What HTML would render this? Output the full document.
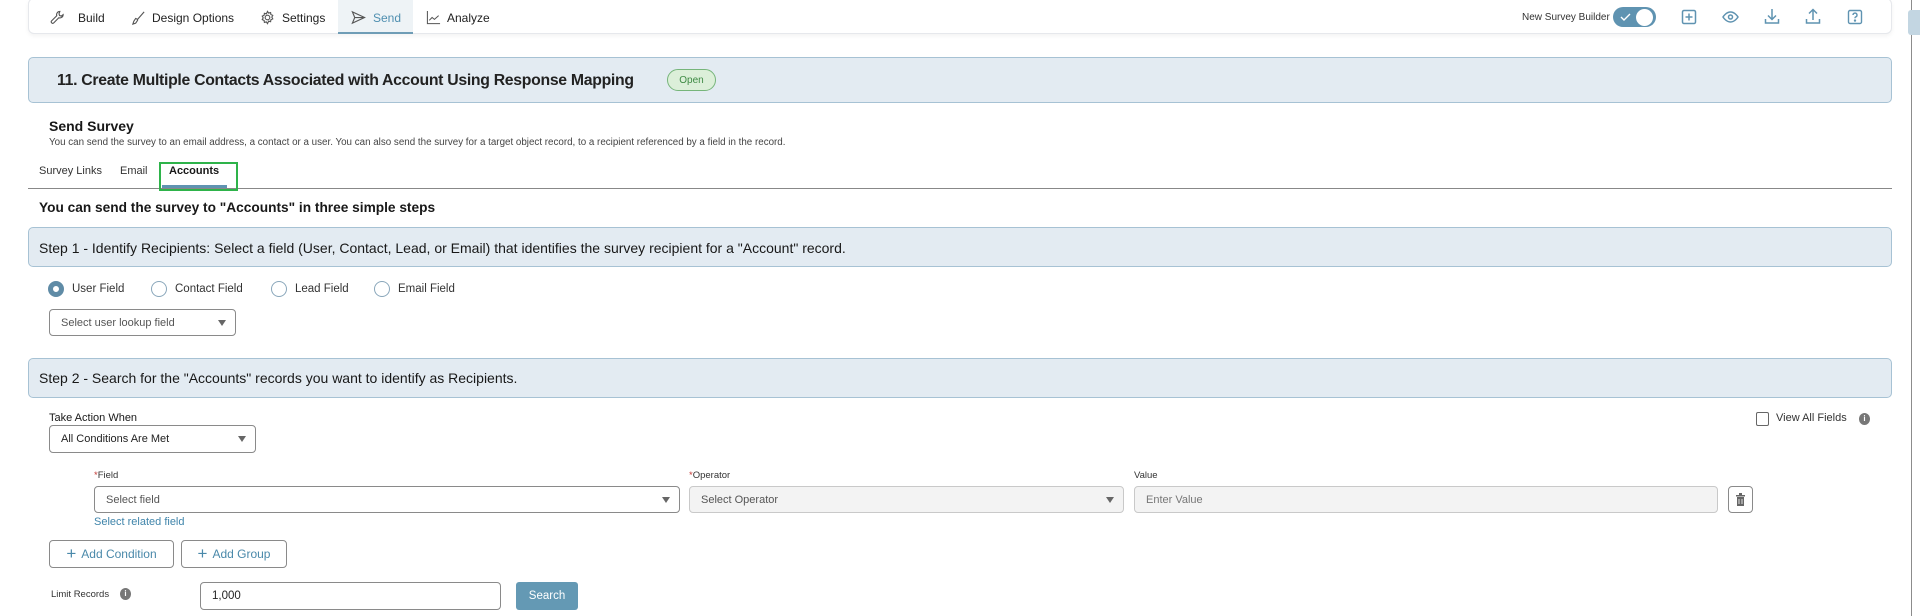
<!DOCTYPE html>
<html><head><meta charset="utf-8">
<style>
*{box-sizing:border-box;margin:0;padding:0}
body{width:1920px;height:616px;background:#fff;position:relative;overflow:hidden;font-family:"Liberation Sans",sans-serif;color:#181818}
.a{position:absolute;white-space:nowrap}
.nav{left:28px;top:-2px;width:1864px;height:36px;border:1px solid #e6e8ec;border-radius:6px;background:#fff;box-shadow:0 2px 4px rgba(0,0,0,.05)}
.ni{font-size:12px;top:11px;color:#222}
.box{left:28px;width:1864px;background:#e3ebf2;border:1px solid #a7c2d4;border-radius:5px}
.sel{border:1px solid #8a8a8a;border-radius:4px;background:#fff;font-size:11px;color:#555;padding-left:11px;display:flex;align-items:center}
.car{position:absolute;right:9px;top:50%;margin-top:-3px;width:0;height:0;border-left:4px solid transparent;border-right:4px solid transparent;border-top:6px solid #666}
.rad{width:16px;height:16px;border:1px solid #8aa7bb;border-radius:50%;background:#fff}
.rl{font-size:11.5px;color:#333}
.lbl{font-size:9.5px;color:#333}
.btn{border:1px solid #8a8a8a;border-radius:4px;background:#fff;color:#4a89aa;font-size:12px;display:flex;align-items:center;justify-content:center}
</style></head><body>

<div class="a nav"></div>
<svg class="a" style="left:50px;top:10px" width="15" height="15" viewBox="0 0 16 16" fill="none" stroke="#555" stroke-width="1.2"><path d="M10.5 1.5a3.5 3.5 0 0 0-3.3 4.6L1.8 11.5a1.5 1.5 0 0 0 2.2 2.2l5.4-5.4a3.5 3.5 0 0 0 4.6-3.3l-2 1.5-1.8-.6-.6-1.8z"/></svg>
<div class="a ni" style="left:78px">Build</div>
<svg class="a" style="left:131px;top:10px" width="15" height="15" viewBox="0 0 16 16" fill="none" stroke="#555" stroke-width="1.2"><path d="M14 2L7 10M7 10l-2-1-2 3-1 3 3-1 2-3z"/></svg>
<div class="a ni" style="left:152px">Design Options</div>
<svg class="a" style="left:260px;top:10px" width="15" height="15" viewBox="0 0 16 16" fill="none" stroke="#555" stroke-width="1.2"><circle cx="8" cy="8" r="2.5"/><path d="M8 1.5l1.2 1.8 2.1-.6.3 2.1 2 .9-1 1.9 1 1.9-2 .9-.3 2.1-2.1-.6L8 14.5l-1.2-1.8-2.1.6-.3-2.1-2-.9 1-1.9-1-1.9 2-.9.3-2.1 2.1.6z"/></svg>
<div class="a ni" style="left:282px">Settings</div>
<div class="a" style="left:338px;top:0;width:75px;height:34px;background:#eef3f6;border-bottom:2px solid #6f9db6"></div>
<svg class="a" style="left:351px;top:10px" width="15" height="15" viewBox="0 0 16 16" fill="none" stroke="#555" stroke-width="1.2"><path d="M1.5 2l13 6-13 6 2.5-6zM4 8h10"/></svg>
<div class="a ni" style="left:373px;color:#4f8fb0">Send</div>
<svg class="a" style="left:426px;top:10px" width="15" height="15" viewBox="0 0 16 16" fill="none" stroke="#555" stroke-width="1.1"><path d="M1.5 1v13.5H15M3.5 11l3-3 2.5 2 4.5-4"/></svg>
<div class="a ni" style="left:447px">Analyze</div>

<div class="a" style="left:1522px;top:12px;font-size:10px;color:#333">New Survey Builder</div>
<div class="a" style="left:1613px;top:7px;width:43px;height:20px;border-radius:10px;background:#5f93b1"></div>
<div class="a" style="left:1636px;top:9px;width:17px;height:17px;border-radius:50%;background:#fff"></div>
<svg class="a" style="left:1619px;top:11px" width="13" height="12" viewBox="0 0 13 12" fill="none" stroke="#fff" stroke-width="1.4"><path d="M2 6l3 3 6-6"/></svg>
<svg class="a" style="left:1681px;top:9px" width="16" height="16" viewBox="0 0 16 16" fill="none" stroke="#5f93b1" stroke-width="1.5"><rect x="1.5" y="1.5" width="13" height="13" rx="1.5"/><path d="M8 4.5v7M4.5 8h7"/></svg>
<svg class="a" style="left:1722px;top:10px" width="17" height="14" viewBox="0 0 17 14" fill="none" stroke="#5f93b1" stroke-width="1.5"><path d="M1 7s3-5 7.5-5S16 7 16 7s-3 5-7.5 5S1 7 1 7z"/><circle cx="8.5" cy="7" r="2"/></svg>
<svg class="a" style="left:1764px;top:8px" width="16" height="17" viewBox="0 0 16 17" fill="none" stroke="#5f93b1" stroke-width="1.5"><path d="M8 1v10M4 7.5l4 4 4-4M1.5 11v4h13v-4"/></svg>
<svg class="a" style="left:1805px;top:8px" width="16" height="17" viewBox="0 0 16 17" fill="none" stroke="#5f93b1" stroke-width="1.5"><path d="M8 12V2M4 5.5l4-4 4 4M1.5 11v4h13v-4"/></svg>
<svg class="a" style="left:1847px;top:9px" width="16" height="16" viewBox="0 0 16 16" fill="none" stroke="#5f93b1" stroke-width="1.4"><rect x="1.5" y="1.5" width="13" height="13" rx="1.5"/><path d="M6 6a2 2 0 1 1 2.5 2c-.4.2-.5.6-.5 1.3"/><circle cx="8" cy="11.6" r=".5" fill="#5f93b1"/></svg>

<div class="a" style="left:1911px;top:0;width:1px;height:616px;background:#8c8c8c"></div>
<div class="a" style="left:1908px;top:10px;width:12px;height:25px;background:#c3d6e2;border-radius:3px 0 0 3px"></div>

<div class="a box" style="top:57px;height:46px"></div>
<div class="a" style="left:57px;top:72px;font-size:15.8px;font-weight:bold;color:#222;letter-spacing:-.3px">11. Create Multiple Contacts Associated with Account Using Response Mapping</div>
<div class="a" style="left:667px;top:69px;width:49px;height:22px;border:1px solid #76b57a;border-radius:11px;background:#dcefd9;color:#3e8a44;font-size:10px;display:flex;align-items:center;justify-content:center">Open</div>

<div class="a" style="left:49px;top:118px;font-size:14px;font-weight:bold">Send Survey</div>
<div class="a" style="left:49px;top:137px;font-size:9.8px;color:#444">You can send the survey to an email address, a contact or a user. You can also send the survey for a target object record, to a recipient referenced by a field in the record.</div>

<div class="a" style="left:39px;top:165px;font-size:11px;color:#333">Survey Links</div>
<div class="a" style="left:120px;top:165px;font-size:11px;color:#333">Email</div>
<div class="a" style="left:169px;top:165px;font-size:11px;font-weight:bold">Accounts</div>
<div class="a" style="left:28px;top:188px;width:1864px;height:1px;background:#888"></div>
<div class="a" style="left:162px;top:185px;width:65px;height:3px;background:#5f93b1"></div>
<div class="a" style="left:159px;top:162px;width:79px;height:29px;border:2px solid #2eb34a"></div>

<div class="a" style="left:39px;top:200px;font-size:13.7px;font-weight:bold">You can send the survey to "Accounts" in three simple steps</div>

<div class="a box" style="top:227px;height:40px"></div>
<div class="a" style="left:39px;top:240px;font-size:14px">Step 1 - Identify Recipients: Select a field (User, Contact, Lead, or Email) that identifies the survey recipient for a "Account" record.</div>

<div class="a rad" style="left:48px;top:281px;border:5px solid #5f8ba6"></div>
<div class="a rl" style="left:72px;top:283px">User Field</div>
<div class="a rad" style="left:151px;top:281px"></div>
<div class="a rl" style="left:175px;top:283px">Contact Field</div>
<div class="a rad" style="left:271px;top:281px"></div>
<div class="a rl" style="left:295px;top:283px">Lead Field</div>
<div class="a rad" style="left:374px;top:281px"></div>
<div class="a rl" style="left:398px;top:283px">Email Field</div>

<div class="a sel" style="left:49px;top:309px;width:187px;height:27px">Select user lookup field<span class="car"></span></div>

<div class="a box" style="top:358px;height:40px"></div>
<div class="a" style="left:39px;top:370px;font-size:14px">Step 2 - Search for the "Accounts" records you want to identify as Recipients.</div>

<div class="a" style="left:49px;top:412px;font-size:11px">Take Action When</div>
<div class="a sel" style="left:49px;top:425px;width:207px;height:28px;color:#222">All Conditions Are Met<span class="car"></span></div>

<div class="a" style="left:1756px;top:412px;width:13px;height:14px;border:1px solid #666;border-radius:2px"></div>
<div class="a" style="left:1776px;top:412px;font-size:11px;color:#333">View All Fields</div>
<div class="a" style="left:1859px;top:413px;width:11px;height:12px;border-radius:50%;background:#777;color:#fff;font-size:8px;text-align:center;line-height:12px;font-weight:bold">i</div>

<div class="a lbl" style="left:94px;top:470px"><span style="color:#c23934">*</span>Field</div>
<div class="a lbl" style="left:689px;top:470px"><span style="color:#c23934">*</span>Operator</div>
<div class="a lbl" style="left:1134px;top:470px">Value</div>
<div class="a sel" style="left:94px;top:486px;width:586px;height:27px">Select field<span class="car"></span></div>
<div class="a sel" style="left:689px;top:486px;width:435px;height:27px;background:#f3f3f3;border-color:#c9c9c9">Select Operator<span class="car"></span></div>
<div class="a sel" style="left:1134px;top:486px;width:584px;height:27px;background:#f3f3f3;border-color:#c9c9c9;color:#777">Enter Value</div>
<div class="a" style="left:1728px;top:486px;width:25px;height:27px;border:1px solid #8a8a8a;border-radius:4px"></div>
<svg class="a" style="left:1735px;top:493px" width="11" height="13" viewBox="0 0 11 13" fill="#666"><rect x="4" y="0" width="3" height="2"/><rect x="1" y="2" width="9" height="1.5"/><path d="M2 4h7v9H2z"/><path d="M4 6v5M7 6v5" stroke="#fff" stroke-width=".8"/></svg>

<div class="a" style="left:94px;top:516px;font-size:11px;color:#3f84aa">Select related field</div>

<div class="a btn" style="left:49px;top:540px;width:125px;height:28px"><span style="font-size:17px;margin-right:5px;font-weight:300">+</span>Add Condition</div>
<div class="a btn" style="left:181px;top:540px;width:106px;height:28px"><span style="font-size:17px;margin-right:5px;font-weight:300">+</span>Add Group</div>

<div class="a" style="left:51px;top:589px;font-size:9.5px;color:#333">Limit Records</div>
<div class="a" style="left:120px;top:588px;width:11px;height:12px;border-radius:50%;background:#777;color:#fff;font-size:8px;text-align:center;line-height:12px;font-weight:bold">i</div>
<div class="a sel" style="left:200px;top:582px;width:301px;height:28px;color:#222;font-size:11.5px">1,000</div>
<div class="a" style="left:516px;top:582px;width:62px;height:28px;background:#6499b4;border-radius:3px;color:#fff;font-size:11.5px;text-align:center;line-height:28px">Search</div>

</body></html>
